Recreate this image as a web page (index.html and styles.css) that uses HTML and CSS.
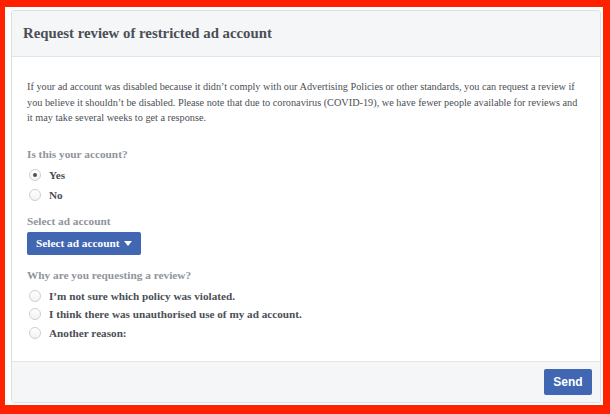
FILE: index.html
```html
<!DOCTYPE html>
<html lang="en">
<head>
  <meta charset="UTF-8" />
  <meta name="viewport" content="width=device-width, initial-scale=1.0"/>
  <title>Request review of restricted ad account</title>
  <link rel="stylesheet" href="styles.css">
</head>
<body>
  <div class="frame">
    <div class="dialog">
      <div class="dialog-header">
        <h1>Request review of restricted ad account</h1>
      </div>

      <form class="dialog-body">
        <p class="intro">If your ad account was disabled because it didn’t comply with our Advertising Policies or other standards, you can request a review if you believe it shouldn’t be disabled. Please note that due to coronavirus (COVID-19), we have fewer people available for reviews and it may take several weeks to get a response.</p>

        <div class="field owner">
          <div class="field-label">Is this your account?</div>
          <label class="option"><span class="radio checked"></span>Yes</label>
          <label class="option"><span class="radio"></span>No</label>
        </div>

        <div class="field account">
          <div class="field-label">Select ad account</div>
          <button type="button" class="select-btn">Select ad account<span class="caret"></span></button>
        </div>

        <div class="field reasons">
          <div class="field-label">Why are you requesting a review?</div>
          <label class="option reason"><span class="radio"></span>I’m not sure which policy was violated.</label>
          <label class="option reason"><span class="radio"></span>I think there was unauthorised use of my ad account.</label>
          <label class="option reason"><span class="radio"></span>Another reason:</label>
        </div>
      </form>

      <div class="dialog-footer">
        <button type="button" class="send-btn">Send</button>
      </div>
    </div>
  </div>
</body>
</html>
```

FILE: styles.css
```css
* {
  box-sizing: border-box;
}

body {
  margin: 0;
  height: 414px;
  padding: 7px 7px 9px 5px;
  background: #ff2200;
  font-family: 'Liberation Serif', 'Times New Roman', serif;
  color: #4b4f56;
}

.frame {
  background: #fff;
  height: 100%;
  padding: 3px 2px 2px 6px;
}

.dialog {
  height: 393px;
  border: 1px solid #dddfe2;
  border-radius: 3px;
  display: flex;
  flex-direction: column;
  overflow: hidden;
}

.dialog-header {
  height: 46px;
  background: #f5f6f7;
  border-bottom: 1px solid #e5e5e5;
  padding: 0 11px;
  display: flex;
  align-items: center;
}

.dialog-header h1 {
  margin: 0;
  font-size: 14.8px;
  font-weight: bold;
  color: #4b4f56;
}

.dialog-body {
  flex: 1;
  padding: 22px 15px 0;
}

.intro {
  margin: 0 0 20px;
  font-size: 10.25px;
  line-height: 15.5px;
  color: #4b4f56;
}

.field {
  margin-bottom: 9px;
}

.field.owner {
  margin-bottom: 8px;
}

.field.account {
  margin-bottom: 12px;
}

.field-label {
  font-size: 11.3px;
  font-weight: bold;
  color: #90949c;
  line-height: 16px;
  margin-bottom: 3px;
}

.reasons .field-label {
  margin-bottom: 4px;
}

.option {
  display: flex;
  align-items: center;
  height: 20px;
  font-size: 11.2px;
  font-weight: bold;
  color: #4b4f56;
}

.option.reason {
  height: 18.5px;
}

.radio {
  width: 12px;
  height: 12px;
  border-radius: 50%;
  border: 1px solid #ccd0d5;
  background: linear-gradient(#fff, #f1f2f4);
  margin: 0 8px 0 2px;
  display: flex;
  align-items: center;
  justify-content: center;
}

.radio.checked::after {
  content: "";
  width: 4px;
  height: 4px;
  border-radius: 50%;
  background: #4b4f56;
}

.select-btn {
  height: 23px;
  padding: 0 9px;
  border: none;
  border-radius: 2px;
  background: #4267b2;
  color: #fff;
  font-family: inherit;
  font-size: 11.3px;
  font-weight: bold;
  display: flex;
  align-items: center;
  gap: 5px;
  margin-top: 2px;
}

.caret {
  width: 0;
  height: 0;
  border-left: 4px solid transparent;
  border-right: 4px solid transparent;
  border-top: 5px solid #fff;
}

.dialog-footer {
  height: 41px;
  background: #f5f6f7;
  border-top: 1px solid #e5e5e5;
  display: flex;
  justify-content: flex-end;
  align-items: center;
  padding: 0 8px;
}

.send-btn {
  width: 48px;
  height: 26px;
  border: none;
  border-radius: 2px;
  background: #4267b2;
  color: #fff;
  font-family: 'Liberation Sans', Arial, sans-serif;
  font-size: 12px;
  font-weight: bold;
}
```
